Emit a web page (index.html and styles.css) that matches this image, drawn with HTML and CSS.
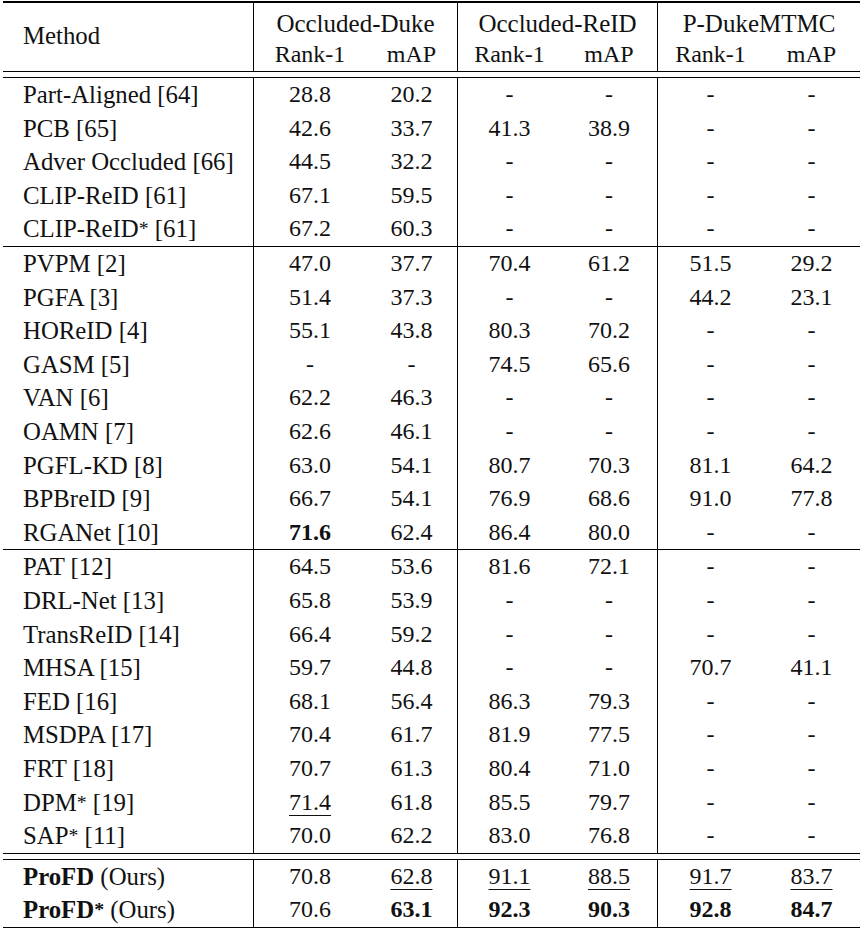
FILE: index.html
```html
<!DOCTYPE html>
<html>
<head>
<meta charset="utf-8">
<link rel="stylesheet" href="styles.css">
</head>
<body>
<table class="results">
  <colgroup>
    <col class="c-method">
    <col class="c-dr"><col class="c-dm">
    <col class="c-rr"><col class="c-rm">
    <col class="c-pr"><col class="c-pm">
  </colgroup>
  <thead>
    <tr class="h1">
      <th class="method" rowspan="2">Method</th>
      <th class="sep group" colspan="2">Occluded-Duke</th>
      <th class="sep group" colspan="2">Occluded-ReID</th>
      <th class="sep group" colspan="2">P-DukeMTMC</th>
    </tr>
    <tr class="h2">
      <th class="sep">Rank-1</th><th>mAP</th>
      <th class="sep">Rank-1</th><th>mAP</th>
      <th class="sep">Rank-1</th><th>mAP</th>
    </tr>
    <tr class="gap"><td colspan="7"></td></tr>
  </thead>
  <tbody>
    <tr><td class="m">Part-Aligned [64]</td><td class="sep">28.8</td><td>20.2</td><td class="sep">-</td><td>-</td><td class="sep">-</td><td>-</td></tr>
    <tr><td class="m">PCB [65]</td><td class="sep">42.6</td><td>33.7</td><td class="sep">41.3</td><td>38.9</td><td class="sep">-</td><td>-</td></tr>
    <tr><td class="m">Adver Occluded [66]</td><td class="sep">44.5</td><td>32.2</td><td class="sep">-</td><td>-</td><td class="sep">-</td><td>-</td></tr>
    <tr><td class="m">CLIP-ReID [61]</td><td class="sep">67.1</td><td>59.5</td><td class="sep">-</td><td>-</td><td class="sep">-</td><td>-</td></tr>
    <tr><td class="m">CLIP-ReID<span class="ast">*</span> [61]</td><td class="sep">67.2</td><td>60.3</td><td class="sep">-</td><td>-</td><td class="sep">-</td><td>-</td></tr>

    <tr class="first"><td class="m">PVPM [2]</td><td class="sep">47.0</td><td>37.7</td><td class="sep">70.4</td><td>61.2</td><td class="sep">51.5</td><td>29.2</td></tr>
    <tr><td class="m">PGFA [3]</td><td class="sep">51.4</td><td>37.3</td><td class="sep">-</td><td>-</td><td class="sep">44.2</td><td>23.1</td></tr>
    <tr><td class="m">HOReID [4]</td><td class="sep">55.1</td><td>43.8</td><td class="sep">80.3</td><td>70.2</td><td class="sep">-</td><td>-</td></tr>
    <tr><td class="m">GASM [5]</td><td class="sep">-</td><td>-</td><td class="sep">74.5</td><td>65.6</td><td class="sep">-</td><td>-</td></tr>
    <tr><td class="m">VAN [6]</td><td class="sep">62.2</td><td>46.3</td><td class="sep">-</td><td>-</td><td class="sep">-</td><td>-</td></tr>
    <tr><td class="m">OAMN [7]</td><td class="sep">62.6</td><td>46.1</td><td class="sep">-</td><td>-</td><td class="sep">-</td><td>-</td></tr>
    <tr><td class="m">PGFL-KD [8]</td><td class="sep">63.0</td><td>54.1</td><td class="sep">80.7</td><td>70.3</td><td class="sep">81.1</td><td>64.2</td></tr>
    <tr><td class="m">BPBreID [9]</td><td class="sep">66.7</td><td>54.1</td><td class="sep">76.9</td><td>68.6</td><td class="sep">91.0</td><td>77.8</td></tr>
    <tr><td class="m">RGANet [10]</td><td class="sep"><b>71.6</b></td><td>62.4</td><td class="sep">86.4</td><td>80.0</td><td class="sep">-</td><td>-</td></tr>

    <tr class="first"><td class="m">PAT [12]</td><td class="sep">64.5</td><td>53.6</td><td class="sep">81.6</td><td>72.1</td><td class="sep">-</td><td>-</td></tr>
    <tr><td class="m">DRL-Net [13]</td><td class="sep">65.8</td><td>53.9</td><td class="sep">-</td><td>-</td><td class="sep">-</td><td>-</td></tr>
    <tr><td class="m">TransReID [14]</td><td class="sep">66.4</td><td>59.2</td><td class="sep">-</td><td>-</td><td class="sep">-</td><td>-</td></tr>
    <tr><td class="m">MHSA [15]</td><td class="sep">59.7</td><td>44.8</td><td class="sep">-</td><td>-</td><td class="sep">70.7</td><td>41.1</td></tr>
    <tr><td class="m">FED [16]</td><td class="sep">68.1</td><td>56.4</td><td class="sep">86.3</td><td>79.3</td><td class="sep">-</td><td>-</td></tr>
    <tr><td class="m">MSDPA [17]</td><td class="sep">70.4</td><td>61.7</td><td class="sep">81.9</td><td>77.5</td><td class="sep">-</td><td>-</td></tr>
    <tr><td class="m">FRT [18]</td><td class="sep">70.7</td><td>61.3</td><td class="sep">80.4</td><td>71.0</td><td class="sep">-</td><td>-</td></tr>
    <tr><td class="m">DPM<span class="ast">*</span> [19]</td><td class="sep"><u>71.4</u></td><td>61.8</td><td class="sep">85.5</td><td>79.7</td><td class="sep">-</td><td>-</td></tr>
    <tr><td class="m">SAP<span class="ast">*</span> [11]</td><td class="sep">70.0</td><td>62.2</td><td class="sep">83.0</td><td>76.8</td><td class="sep">-</td><td>-</td></tr>

    <tr class="gap"><td colspan="7"></td></tr>

    <tr><td class="m"><b>ProFD</b> (Ours)</td><td class="sep">70.8</td><td><u>62.8</u></td><td class="sep"><u>91.1</u></td><td><u>88.5</u></td><td class="sep"><u>91.7</u></td><td><u>83.7</u></td></tr>
    <tr class="last"><td class="m"><b>ProFD<span class="ast">*</span></b> (Ours)</td><td class="sep">70.6</td><td><b>63.1</b></td><td class="sep"><b>92.3</b></td><td><b>90.3</b></td><td class="sep"><b>92.8</b></td><td><b>84.7</b></td></tr>
  </tbody>
</table>
</body>
</html>
```

FILE: styles.css
```css
html, body {
  margin: 0;
  padding: 0;
  background: #ffffff;
}

body {
  font-family: "Liberation Serif", "DejaVu Serif", serif;
  font-size: 24px;
  color: #111111;
}

.results {
  margin: 1px 0 0 3px;
  width: 857px;
  table-layout: fixed;
  border-collapse: separate;
  border-spacing: 0;
  border-top: 2px solid #000;
}

.c-method { width: 250px; }
.c-dr { width: 113px; }
.c-dm { width: 91px; }
.c-rr { width: 104px; }
.c-rm { width: 96px; }
.c-pr { width: 106px; }
.c-pm { width: 97px; }

th, td {
  padding: 0;
  font-weight: normal;
  text-align: center;
  white-space: nowrap;
}

.sep {
  border-left: 1px solid #000;
}

.h1 th {
  line-height: 30px;
  padding-top: 6px;
}

.h1 th.group {
  font-size: 25px;
}

.h1 th.method {
  padding-top: 0;
  padding-bottom: 3px;
  padding-left: 20px;
  text-align: left;
  vertical-align: middle;
  font-size: 24.8px;
}

.h2 th {
  line-height: 30px;
  padding-bottom: 2px;
}

.gap td {
  height: 5px;
  padding: 0;
  font-size: 0;
  line-height: 0;
  border-top: 1px solid #000;
  border-bottom: 1px solid #000;
}

tbody td {
  line-height: 33.6px;
}

td.m {
  text-align: left;
  padding-left: 20px;
  font-size: 24.8px;
}

tr.first td {
  border-top: 1px solid #000;
}

tr.last td {
  border-bottom: 1px solid #000;
}

b {
  font-weight: bold;
}

u {
  text-decoration: underline;
  text-decoration-thickness: 1px;
  text-underline-offset: 5px;
}

.ast {
  font-size: 0.8em;
  vertical-align: 0.1em;
}
```
